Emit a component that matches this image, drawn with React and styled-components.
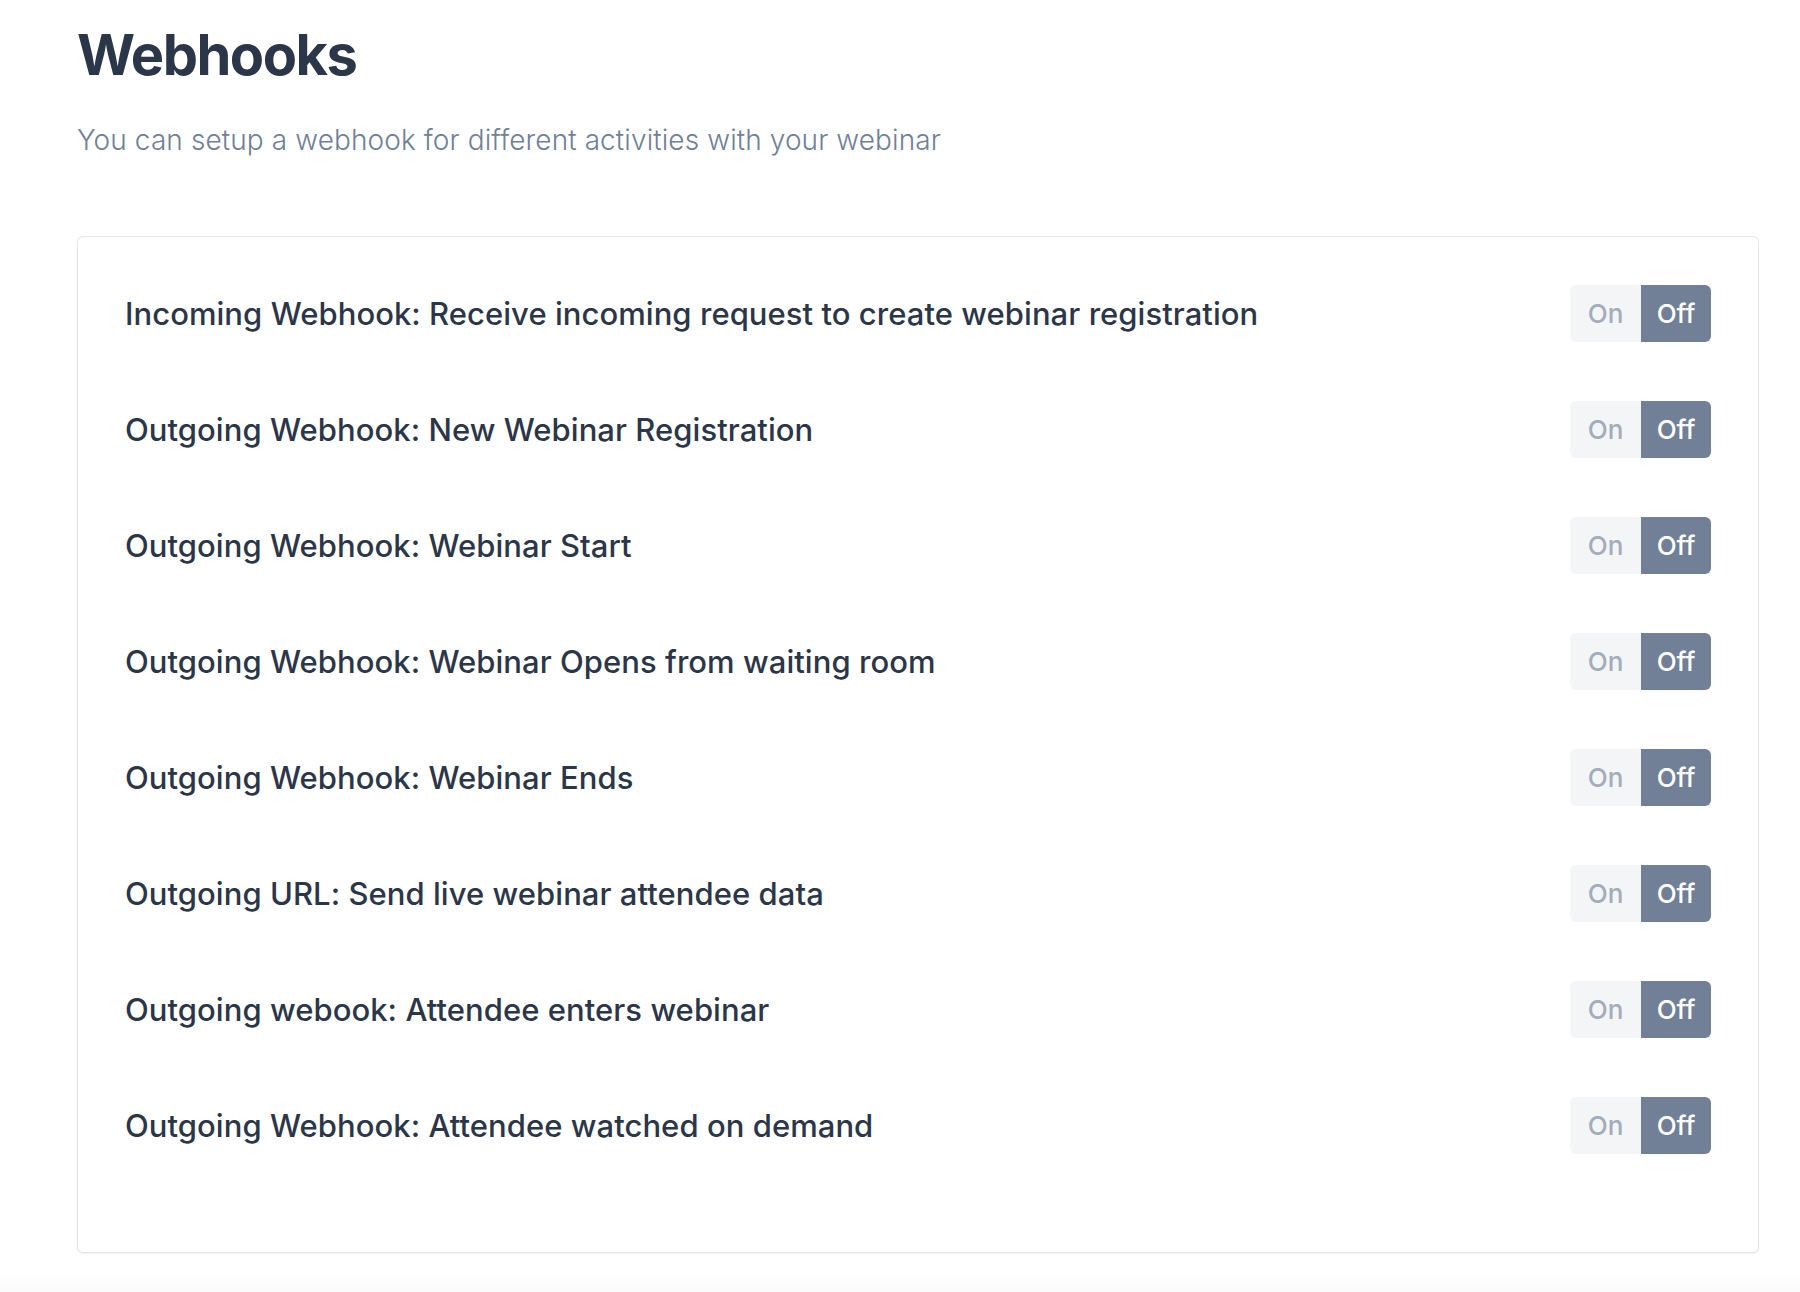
import React from "react";
import styled, { createGlobalStyle } from "styled-components";

const Global = createGlobalStyle`
  html, body { margin: 0; padding: 0; background: #ffffff; }
  body { font-family: Inter, "Noto Sans", sans-serif; -webkit-font-smoothing: antialiased; }
  * { box-sizing: border-box; }
`;

const Page = styled.div`
  min-height: 1292px;
  padding: 22px 41px 0 77px;
  background: linear-gradient(to bottom, #ffffff 0, #ffffff 1272px, #fafafa 1292px);
`;

const Title = styled.h1`
  margin: 0;
  font-size: 56px;
  line-height: 67px;
  font-weight: 700;
  color: #2b3648;
  letter-spacing: -1.5px;
`;

const Subtitle = styled.p`
  margin: 34px 0 0;
  font-size: 28px;
  line-height: 34px;
  font-weight: 300;
  color: #718096;
  letter-spacing: 0.1px;
`;

const Card = styled.section`
  margin-top: 79px;
  border: 1px solid #e5e5e5;
  border-radius: 6px;
  background: #fff;
  box-shadow: 0 1px 2px rgba(0, 0, 0, 0.06);
  padding: 18px 47px 69px 47px;
  display: flex;
  flex-direction: column;
`;

const Row = styled.div`
  height: 116px;
  display: flex;
  align-items: center;
  justify-content: space-between;
`;

const Label = styled.span`
  font-size: 31px;
  font-weight: 500;
  color: #2b3648;
  letter-spacing: 0.05px;
`;

const Toggle = styled.div`
  display: flex;
  height: 57px;
  border-radius: 6px;
  overflow: hidden;
`;

const Half = styled.button`
  border: 0;
  margin: 0;
  padding: 0;
  width: ${(p) => (p.$side === "on" ? 71 : 70)}px;
  height: 100%;
  font-family: inherit;
  font-size: 26px;
  font-weight: 500;
  background: ${(p) => (p.$active ? "#718096" : "#f4f5f7")};
  color: ${(p) => (p.$active ? "#ffffff" : "#a3acbb")};
  cursor: pointer;
`;

const items = [
  "Incoming Webhook: Receive incoming request to create webinar registration",
  "Outgoing Webhook: New Webinar Registration",
  "Outgoing Webhook: Webinar Start",
  "Outgoing Webhook: Webinar Opens from waiting room",
  "Outgoing Webhook: Webinar Ends",
  "Outgoing URL: Send live webinar attendee data",
  "Outgoing webook: Attendee enters webinar",
  "Outgoing Webhook: Attendee watched on demand",
];

export default function App() {
  return (
    <>
      <Global />
      <Page>
        <Title>Webhooks</Title>
        <Subtitle>You can setup a webhook for different activities with your webinar</Subtitle>
        <Card>
          {items.map((t) => (
            <Row key={t}>
              <Label>{t}</Label>
              <Toggle>
                <Half $side="on">On</Half>
                <Half $side="off" $active>Off</Half>
              </Toggle>
            </Row>
          ))}
        </Card>
      </Page>
    </>
  );
}
